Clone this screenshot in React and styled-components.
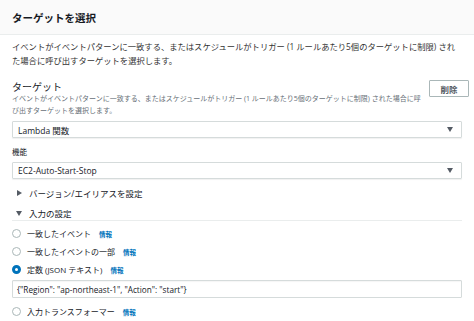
import React from "react";
import styled, { createGlobalStyle } from "styled-components";

const Global = createGlobalStyle`
  html, body { margin: 0; padding: 0; background: #fff; }
  body { font-family: "Open Sans", "Noto Sans CJK JP", sans-serif; color: #16191f; }
  * { box-sizing: border-box; }
`;

const Panel = styled.div`
  width: 474px;
  height: 321px;
  overflow: hidden;
  background: #fff;
`;

const Header = styled.div`
  height: 35px;
  display: flex;
  align-items: center;
  padding: 0 12px;
  background: #fafafa;
  border-bottom: 1px solid #eaeded;
`;

const Title = styled.h2`
  margin: 0;
  font-size: 10.5px;
  font-weight: 700;
  color: #16191f;
`;

const Body = styled.div`
  padding: 5px 5px 0 12px;
  display: flex;
  flex-direction: column;
`;

const Description = styled.p`
  margin: 0;
  font-size: 8.3px;
  line-height: 14px;
  color: #333;
  white-space: nowrap;
`;

const TargetRow = styled.div`
  margin-top: 12px;
  display: flex;
  align-items: flex-start;
  justify-content: space-between;
`;

const TargetText = styled.div`
  display: flex;
  flex-direction: column;
  padding-top: 1px;
`;

const Heading = styled.h3`
  margin: 0;
  font-size: 10px;
  font-weight: 400;
  line-height: 12px;
  color: #16191f;
`;

const SubDesc = styled.p`
  margin: 0;
  font-size: 7px;
  line-height: 12px;
  color: #687078;
  white-space: nowrap;
`;

const DeleteButton = styled.button`
  width: 40px;
  height: 17px;
  padding: 0;
  border: 1px solid #aab7b8;
  border-radius: 1px;
  background: #fff;
  font-family: "Open Sans", "Noto Sans CJK JP", sans-serif;
  font-size: 8.5px;
  font-weight: 700;
  color: #545b64;
`;

const Field = styled.div`
  margin-right: 7px;
  margin-top: ${(p) => p.$mt || 0}px;
`;

const Select = styled.div`
  height: 17px;
  display: flex;
  align-items: center;
  justify-content: space-between;
  padding: 0 8px 0 5px;
  border: 1px solid #d5dbdb;
  border-radius: 1px;
  box-shadow: 0 1px 1px rgba(0, 0, 0, 0.06);
  font-size: 8.5px;
  color: #16191f;
`;

const Caret = styled.span`
  width: 0;
  height: 0;
  border-left: 3.5px solid transparent;
  border-right: 3.5px solid transparent;
  border-top: 5px solid #545b64;
`;

const Label = styled.div`
  font-size: 7.5px;
  line-height: 12px;
  color: #16191f;
  margin-bottom: 4px;
`;

const Toggle = styled.div`
  margin-top: ${(p) => p.$mt}px;
  margin-right: 7px;
  height: 14px;
  display: flex;
  align-items: center;
  gap: 6px;
  padding-left: 3px;
  font-size: 8.5px;
  color: #16191f;
  ${(p) => p.$divider && "height: 15px; border-bottom: 1px solid #eaeded;"}
`;

const Tri = styled.span`
  width: 0;
  height: 0;
  ${(p) =>
    p.$open
      ? "border-left: 3px solid transparent; border-right: 3px solid transparent; border-top: 5px solid #545b64; margin: 0 1px;"
      : "border-top: 3px solid transparent; border-bottom: 3px solid transparent; border-left: 5px solid #545b64; margin: 0 1px 0 2px;"}
`;

const RadioRow = styled.label`
  height: 18px;
  display: flex;
  align-items: center;
  gap: 6px;
  font-size: 8px;
  color: #16191f;
  margin-top: ${(p) => p.$mt || 0}px;
`;

const Radio = styled.span`
  width: 9px;
  height: 9px;
  border-radius: 50%;
  flex: none;
  background: #fff;
  border: ${(p) => (p.$checked ? "3px solid #0073bb" : "1px solid #aab7b8")};
`;

const Info = styled.a`
  margin-left: 8px;
  font-size: 6.5px;
  font-weight: 700;
  color: #0073bb;
  text-decoration: none;
`;

const JsonInput = styled.div`
  margin-top: 2px;
  margin-right: 7px;
  height: 18px;
  display: flex;
  align-items: center;
  padding: 0 4px;
  border: 1px solid #d5dbdb;
  border-radius: 1px;
  box-shadow: inset 0 1px 1px rgba(0, 0, 0, 0.04);
  font-size: 8.2px;
  color: #16191f;
  white-space: nowrap;
`;

const options = [
  { label: "一致したイベント" },
  { label: "一致したイベントの一部" },
  { label: "定数 (JSON テキスト)", checked: true },
];

export default function App() {
  return (
    <Panel>
      <Global />
      <Header>
        <Title>ターゲットを選択</Title>
      </Header>
      <Body>
        <Description>
          イベントがイベントパターンに一致する、またはスケジュールがトリガー (1 ルールあたり5個のターゲットに制限) され
          <br />
          た場合に呼び出すターゲットを選択します。
        </Description>
        <TargetRow>
          <TargetText>
            <Heading>ターゲット</Heading>
            <SubDesc>
              イベントがイベントパターンに一致する、またはスケジュールがトリガー (1 ルールあたり5個のターゲットに制限) された場合に呼
              <br />
              び出すターゲットを選択します。
            </SubDesc>
          </TargetText>
          <DeleteButton>削除</DeleteButton>
        </TargetRow>
        <Field $mt={4}>
          <Select>
            <span>Lambda 関数</span>
            <Caret />
          </Select>
        </Field>
        <Field $mt={8}>
          <Label>機能</Label>
          <Select>
            <span>EC2-Auto-Start-Stop</span>
            <Caret />
          </Select>
        </Field>
        <Toggle $mt={7}>
          <Tri />
          <span>バージョン/エイリアスを設定</span>
        </Toggle>
        <Toggle $mt={6} $divider>
          <Tri $open />
          <span>入力の設定</span>
        </Toggle>
        {options.map((o, i) => (
          <RadioRow key={o.label} $mt={i === 0 ? 3 : 0}>
            <Radio $checked={o.checked} />
            <span>
              {o.label}
              <Info>情報</Info>
            </span>
          </RadioRow>
        ))}
        <JsonInput>{'{"Region": "ap-northeast-1", "Action": "start"}'}</JsonInput>
        <RadioRow $mt={4}>
          <Radio />
          <span>
            入力トランスフォーマー
            <Info>情報</Info>
          </span>
        </RadioRow>
      </Body>
    </Panel>
  );
}
